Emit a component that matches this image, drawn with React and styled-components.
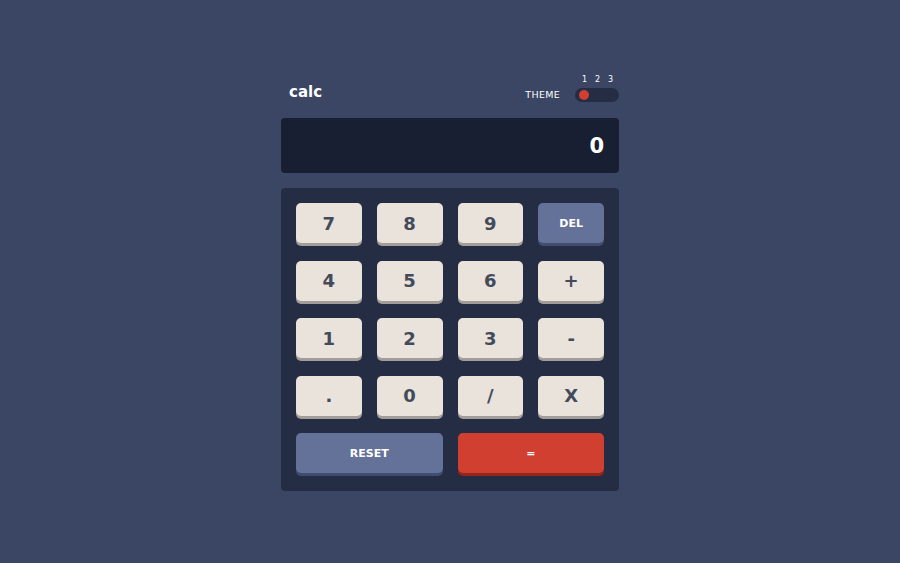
import React, { useState } from "react";
import styled, { createGlobalStyle } from "styled-components";

const GlobalStyle = createGlobalStyle`
  html, body {
    margin: 0;
    padding: 0;
    background: #3b4664;
    font-family: "DejaVu Sans", "Noto Sans", sans-serif;
  }
`;

const Page = styled.div`
  min-height: 563px;
  display: flex;
  justify-content: center;
`;

const Calculator = styled.div`
  width: 338px;
  padding-top: 73px;
`;

const Header = styled.div`
  display: flex;
  justify-content: space-between;
  align-items: flex-end;
  height: 31px;
  padding-left: 8px;
`;

const Logo = styled.h1`
  margin: 0 0 3px;
  color: #ffffff;
  font-size: 15px;
  font-weight: bold;
  line-height: 18px;
`;

const ThemeArea = styled.div`
  display: flex;
  align-items: flex-end;
  gap: 15px;
  margin-bottom: 2px;
`;

const ThemeLabel = styled.span`
  color: #ffffff;
  font-size: 9.5px;
  letter-spacing: 0.3px;
  line-height: 14px;
  margin-bottom: 0;
`;

const ToggleWrap = styled.div`
  display: flex;
  flex-direction: column;
  align-items: stretch;
  width: 44px;
`;

const ToggleNumbers = styled.div`
  display: flex;
  justify-content: space-between;
  padding: 0 6px 0 7px;
  color: #ffffff;
  font-size: 8px;
  line-height: 10px;
  margin-bottom: 3px;
`;

const Track = styled.div`
  height: 14px;
  border-radius: 7px;
  background: #252d44;
  display: flex;
  align-items: center;
  padding: 0 4px;
  cursor: pointer;
`;

const Knob = styled.div`
  width: 10px;
  height: 10px;
  border-radius: 50%;
  background: #d03f2f;
  margin-left: ${(p) => p.pos * 13}px;
`;

const Screen = styled.div`
  margin-top: 14px;
  height: 55px;
  border-radius: 4px;
  background: #181f33;
  display: flex;
  align-items: center;
  justify-content: flex-end;
  padding: 0 15px;
  color: #ffffff;
  font-size: 21px;
  font-weight: bold;
`;

const Keypad = styled.div`
  margin-top: 15px;
  background: #252d44;
  border-radius: 4px;
  padding: 15px 15px 18px;
  display: grid;
  grid-template-columns: repeat(4, 1fr);
  column-gap: 15px;
  row-gap: 17.5px;
`;

const palette = {
  num: { bg: "#eae3dc", shadow: "#a29d98", color: "#434a59", size: "18px" },
  blue: { bg: "#647198", shadow: "#414c6e", color: "#ffffff", size: "11px" },
  red: { bg: "#d03f2f", shadow: "#93261a", color: "#ffffff", size: "11px" },
};

const Key = styled.button`
  height: 40px;
  border: none;
  border-radius: 5px;
  background: ${(p) => palette[p.kind].bg};
  box-shadow: 0 3px 0 ${(p) => palette[p.kind].shadow};
  color: ${(p) => palette[p.kind].color};
  font-family: "DejaVu Sans", sans-serif;
  font-size: ${(p) => palette[p.kind].size};
  font-weight: bold;
  grid-column: span ${(p) => p.span || 1};
  cursor: pointer;
  padding: 0;
`;

const keys = [
  ["7", "num"], ["8", "num"], ["9", "num"], ["DEL", "blue"],
  ["4", "num"], ["5", "num"], ["6", "num"], ["+", "num"],
  ["1", "num"], ["2", "num"], ["3", "num"], ["-", "num"],
  [".", "num"], ["0", "num"], ["/", "num"], ["X", "num"],
];

export default function App() {
  const [theme, setTheme] = useState(0);
  return (
    <Page>
      <GlobalStyle />
      <Calculator>
        <Header>
          <Logo>calc</Logo>
          <ThemeArea>
            <ThemeLabel>THEME</ThemeLabel>
            <ToggleWrap>
              <ToggleNumbers>
                <span>1</span>
                <span>2</span>
                <span>3</span>
              </ToggleNumbers>
              <Track onClick={() => setTheme((theme + 1) % 3)}>
                <Knob pos={theme} />
              </Track>
            </ToggleWrap>
          </ThemeArea>
        </Header>
        <Screen>0</Screen>
        <Keypad>
          {keys.map(([label, kind]) => (
            <Key key={label} kind={kind}>{label}</Key>
          ))}
          <Key kind="blue" span={2}>RESET</Key>
          <Key kind="red" span={2}>=</Key>
        </Keypad>
      </Calculator>
    </Page>
  );
}
